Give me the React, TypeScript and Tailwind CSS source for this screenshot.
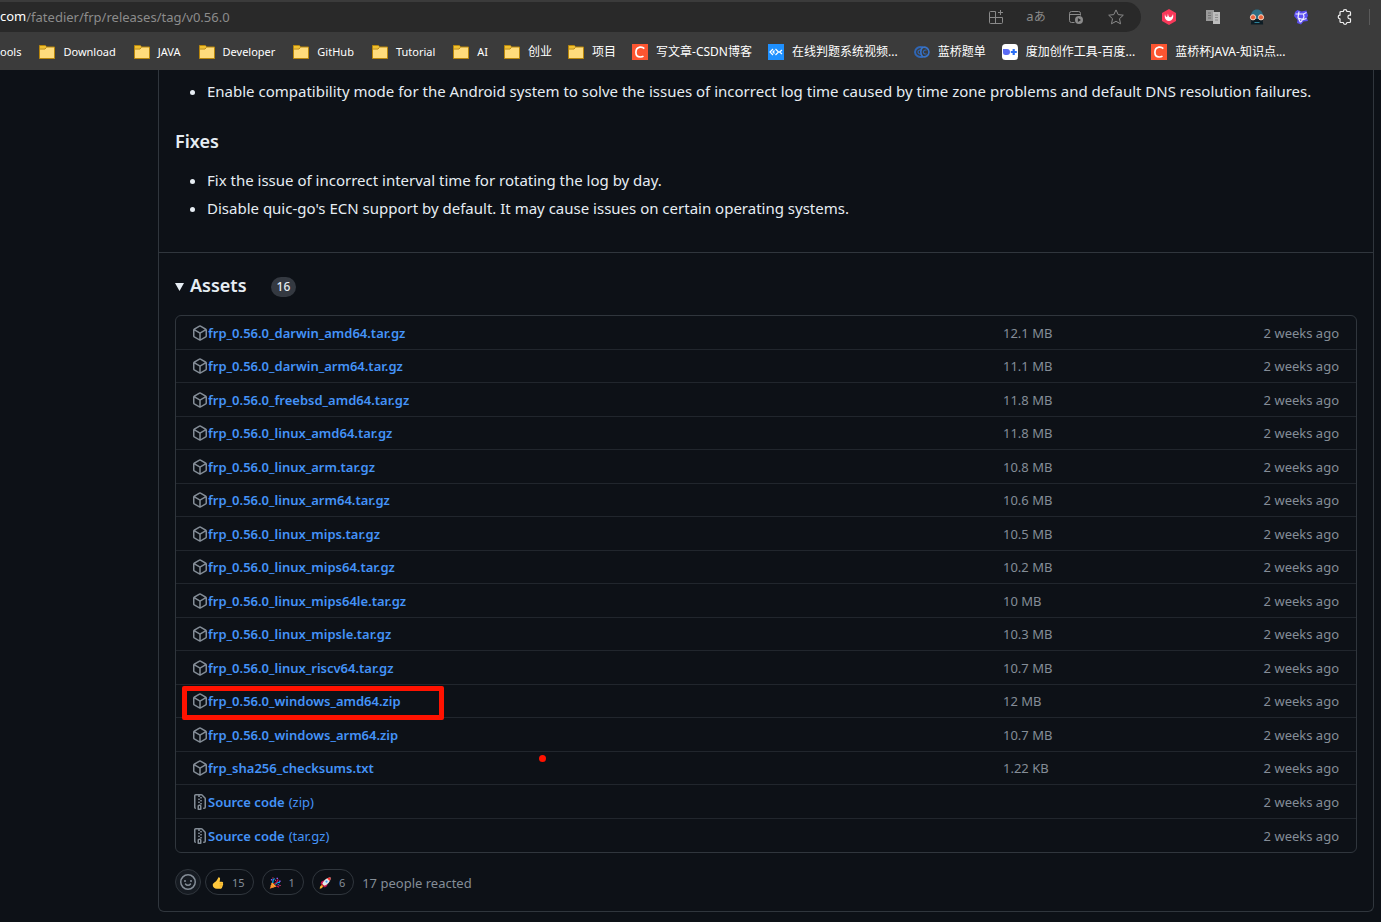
import React from 'react';

type Asset = {
  name: string;
  suffix?: string;
  size?: string;
  mark?: 'box' | 'dot';
};

const assets: Asset[] = [
  { name: 'frp_0.56.0_darwin_amd64.tar.gz', size: '12.1 MB' },
  { name: 'frp_0.56.0_darwin_arm64.tar.gz', size: '11.1 MB' },
  { name: 'frp_0.56.0_freebsd_amd64.tar.gz', size: '11.8 MB' },
  { name: 'frp_0.56.0_linux_amd64.tar.gz', size: '11.8 MB' },
  { name: 'frp_0.56.0_linux_arm.tar.gz', size: '10.8 MB' },
  { name: 'frp_0.56.0_linux_arm64.tar.gz', size: '10.6 MB' },
  { name: 'frp_0.56.0_linux_mips.tar.gz', size: '10.5 MB' },
  { name: 'frp_0.56.0_linux_mips64.tar.gz', size: '10.2 MB' },
  { name: 'frp_0.56.0_linux_mips64le.tar.gz', size: '10 MB' },
  { name: 'frp_0.56.0_linux_mipsle.tar.gz', size: '10.3 MB' },
  { name: 'frp_0.56.0_linux_riscv64.tar.gz', size: '10.7 MB' },
  { name: 'frp_0.56.0_windows_amd64.zip', size: '12 MB', mark: 'box' },
  { name: 'frp_0.56.0_windows_arm64.zip', size: '10.7 MB' },
  { name: 'frp_sha256_checksums.txt', size: '1.22 KB', mark: 'dot' },
  { name: 'Source code', suffix: '(zip)' },
  { name: 'Source code', suffix: '(tar.gz)' },
];

const FolderIcon = () => (
  <svg className="size-4 shrink-0" viewBox="0 0 16 16">
    <path d="M.5 1.5h5.8l1.2 1.500h8v11.500H.5z" fill="#ffdc7c" stroke="#b8860b" />
    <path d="M1 2h5l1 1.200-1 1.300H1z" fill="#f0c02e" />
    <path d="M1 5h5l1.500-1.800" fill="none" stroke="#b8860b" />
  </svg>
);

const CsdnIcon = () => (
  <svg className="size-4 shrink-0" viewBox="0 0 16 16">
    <path d="M0 0h16v16H0z" fill="#fc5531" />
    <path d="M12.300 4.600C11 3.300 9.300 3 7.900 3.200 5.300 3.600 4 5.800 3.900 8.300c0 3 1.600 4.700 4.300 4.700 1.300 0 2.400-.3 3.300-.9" fill="none" stroke="#fff" strokeWidth="1.700" />
  </svg>
);

const CodeIcon = () => (
  <svg className="size-4 shrink-0" viewBox="0 0 16 16">
    <path d="M0 0h16v16H0z" fill="#1e90ff" />
    <path d="M5 5 2 8l3 3M7.500 5l3 3-3 3M6.500 6.500 5 8l1.500 1.500M14 6l-2.500 2L14 10" fill="none" stroke="#fff" strokeWidth="1.200" />
  </svg>
);

const BridgeIcon = () => (
  <svg className="size-4 shrink-0" viewBox="0 0 16 16" fill="none">
    <path d="M9 3.500C5 1.800 1 4.500 1 8s4 6.200 8 4.500" stroke="#2f66b5" strokeWidth="2" />
    <path d="M8 6C5.500 5.500 4 6.500 4 8s1.500 2.500 4 2" stroke="#2f66b5" strokeWidth="1.300" />
    <path d="M8.500 3.500c3-1.200 6.500 1 6.500 4.500s-3.500 5.700-6.500 4.500C6.200 11 6.200 5 8.500 3.500z" stroke="#3873c8" strokeWidth="1.600" />
    <path d="M12.500 6.200C10.500 5.500 9.300 6.800 9.300 8s1.200 2.500 3.200 1.800" stroke="#2f66b5" strokeWidth="1.200" />
  </svg>
);

const DujiaIcon = () => (
  <svg className="size-4 shrink-0" viewBox="0 0 16 16">
    <rect width="16" height="16" rx="3.500" fill="#fff" />
    <path d="M1 5h4a3 3 0 0 1 0 6H3.500A2.500 2.500 0 0 1 1 8.500z" fill="#5b6cf5" />
    <path d="M11.700 5v6M8.800 8h6" stroke="#2b6ff5" strokeWidth="2.200" />
  </svg>
);

const folders = ['Download', 'JAVA', 'Developer', 'GitHub', 'Tutorial', 'AI'];

const bookmarks = [
  { label: '创业', Icon: FolderIcon },
  { label: '项目', Icon: FolderIcon },
  { label: '写文章-CSDN博客', Icon: CsdnIcon },
  { label: '在线判题系统视频...', Icon: CodeIcon },
  { label: '蓝桥题单', Icon: BridgeIcon },
  { label: '度加创作工具-百度...', Icon: DujiaIcon },
  { label: '蓝桥杯JAVA-知识点...', Icon: CsdnIcon },
];

const PackageIcon = () => (
  <svg className="size-4 shrink-0 fill-[#848d97]" viewBox="0 0 16 16">
    <path d="m8.878.392 5.250 3.045c.54.314.872.890.872 1.514v6.098a1.750 1.750 0 0 1-.872 1.514l-5.250 3.045a1.750 1.750 0 0 1-1.756 0l-5.250-3.045A1.750 1.750 0 0 1 1 11.049V4.951c0-.624.332-1.201.872-1.514L7.122.392a1.750 1.750 0 0 1 1.756 0ZM7.875 1.690l-4.630 2.685L8 7.133l4.755-2.758-4.630-2.685a.248.248 0 0 0-.25 0ZM2.500 5.677v5.372c0 .09.047.171.125.216l4.625 2.683V8.432Zm6.250 8.271 4.625-2.683a.25.25 0 0 0 .125-.216V5.677L8.750 8.432Z" />
  </svg>
);

const FileZipIcon = () => (
  <svg className="size-4 shrink-0 fill-[#848d97]" viewBox="0 0 16 16">
    <path d="M3.500 1.750v11.500c0 .09.048.173.126.217a.75.75 0 0 1-.752 1.298A1.748 1.748 0 0 1 2 13.250V1.750C2 .784 2.784 0 3.750 0h5.586c.464 0 .909.185 1.237.513l2.914 2.914c.329.328.513.773.513 1.237v8.586A1.750 1.750 0 0 1 12.250 15h-.5a.75.75 0 0 1 0-1.500h.5a.25.25 0 0 0 .25-.25V4.664a.25.25 0 0 0-.073-.177L9.513 1.573a.25.25 0 0 0-.177-.073H7.250a.75.75 0 0 1 0 1.500h-.5a.75.75 0 0 1 0-1.500h-3a.25.25 0 0 0-.25.25Zm3.750 8.750h.5c.966 0 1.750.784 1.750 1.750v3a.75.75 0 0 1-.75.75h-2.500a.75.75 0 0 1-.75-.75v-3c0-.966.784-1.750 1.750-1.750ZM6 5.250a.75.75 0 0 1 .75-.75h.5a.75.75 0 0 1 0 1.500h-.5A.75.75 0 0 1 6 5.250Zm.75 2.250h.5a.75.75 0 0 1 0 1.500h-.5a.75.75 0 0 1 0-1.500ZM8 6.750A.75.75 0 0 1 8.750 6h.5a.75.75 0 0 1 0 1.500h-.5A.75.75 0 0 1 8 6.750ZM8.750 3h.5a.75.75 0 0 1 0 1.500h-.5a.75.75 0 0 1 0-1.500ZM8 9.750A.75.75 0 0 1 8.750 9h.5a.75.75 0 0 1 0 1.500h-.5A.75.75 0 0 1 8 9.750Zm-1 2.500v2.250h1v-2.250a.25.25 0 0 0-.25-.25h-.5a.25.25 0 0 0-.25.25Z" />
  </svg>
);

const SmileyIcon = () => (
  <svg className="size-4" viewBox="0 0 16 16">
    <circle cx="8" cy="8" r="7.250" fill="none" stroke="#848d97" strokeWidth="1.500" />
    <circle cx="5" cy="7" r="1" fill="#848d97" />
    <circle cx="11" cy="7" r="1" fill="#848d97" />
    <path d="M5.500 10c1.200 1.700 3.800 1.700 5 0" fill="none" stroke="#848d97" strokeWidth="1.500" strokeLinecap="round" />
  </svg>
);

const ThumbsUp = () => (
  <svg className="size-3" viewBox="0 0 16 16">
    <path d="M8.500.500c1.500-.3 2.500.9 2.200 2.400L10.200 6.200h3c1.900 0 2 1.900 1.200 2.500.8.700.6 1.900-.2 2.300.5.800.2 1.800-.7 2.100.3 1-.4 2.400-1.500 2.400H6.500C3 15.500 1 13.300 1 10.600 1 7.800 5.700 7 7.400 2.800z" fill="#ffc83d" />
    <path d="M10 8.700h3.700M10.200 11h3.300M10.300 13.200h2.400" stroke="#e19d1a" strokeWidth=".7" />
  </svg>
);

const Party = () => (
  <svg className="size-3" viewBox="0 0 16 16">
    <path d="M1 15.500 4 6.500l6 6z" fill="#ff822d" />
    <path d="m2.500 11 3 3M3.500 8.200l4.700 4.700" stroke="#fcd53f" strokeWidth="1" />
    <path d="M5 8c0-3 .5-5 2.500-6M8.500 10c1-2 3.500-3.500 6-2.500" stroke="#00a6ed" strokeWidth="1.600" fill="none" />
    <path d="M7 9c3-1 4.500-3 5-6M10 12l3.500 1.500" stroke="#ca0b4a" strokeWidth="1.600" fill="none" />
    <path d="M2.500 2.500h2v2h-2zM10 1h2v1.500h-2zM13.500 4.500h2v2h-2zM11.500 9.500h2v1.500h-2z" fill="#8b5cf6" />
    <path d="M8 3.500h1.500V5H8zM14 10.500h1.500V12H14zM4.500.5H6V2H4.500z" fill="#f5427b" />
  </svg>
);

const Rocket = () => (
  <svg className="size-3" viewBox="0 0 16 16">
    <path d="M1 15.500c0-2.500 1-4.500 3-5l1.500 1.500c-.5 2-2 3.500-4.500 3.500z" fill="#ffb02e" />
    <path d="M2 8.500c1-3 3-4 5-3.800L4.500 10zM7.500 14c3-1 4-3 3.800-5L6 11.500z" fill="#ca0b4a" />
    <path d="M15.500.5c-5 0-9 3-11.200 8.800l2.400 2.400C12.500 9.500 15.500 5.500 15.500.5z" fill="#e6e6e6" />
    <path d="M15.500.5c-1.800 0-3.400.4-4.800 1.200l3.600 3.600c.8-1.400 1.200-3 1.200-4.800z" fill="#f8312f" />
    <circle cx="10" cy="6" r="1.500" fill="#46a4fb" />
    <path d="m3.500 9.500 3 3" stroke="#f8312f" strokeWidth="1.500" />
  </svg>
);

const reactions = [
  { label: 'thumbs up', count: 15, Icon: ThumbsUp },
  { label: 'hooray', count: 1, Icon: Party },
  { label: 'rocket', count: 6, Icon: Rocket },
];

const AddressBar = () => (
  <div className="flex items-center pt-0.5">
    <div className="flex h-[30px] flex-1 items-center rounded-r-full bg-[#292929] pr-[17px] text-[13px]">
      <label htmlFor="address" className="text-white">com</label>
      <input
        id="address"
        className="h-full min-w-0 flex-1 bg-transparent text-[#8c8c8c] outline-none"
        defaultValue="/fatedier/frp/releases/tag/v0.56.0"
      />
      <div className="flex items-center gap-6 text-[#8a8a8a]">
        <button aria-label="Apps">
          <svg className="size-4" viewBox="0 0 16 16" fill="none" stroke="currentColor">
            <path d="M7.500 2.500h-5a1 1 0 0 0-1 1v10a1 1 0 0 0 1 1h11a1 1 0 0 0 1-1v-5h-13M7.500 2.500v12M12.500 1v5M10 3.500h5" />
          </svg>
        </button>
        <button aria-label="Translate" className="w-4">
          <span className="-mx-1 flex items-center justify-center">a<span className="text-xs">あ</span></span>
        </button>
        <button aria-label="Media">
          <svg className="size-4" viewBox="0 0 16 16">
            <path d="M6.500 13.500h-3a2 2 0 0 1-2-2v-7a2 2 0 0 1 2-2h7a2 2 0 0 1 2 2v2M1.500 5.500h11" fill="none" stroke="currentColor" />
            <circle cx="11" cy="11" r="4" fill="currentColor" />
            <path d="m9.900 9 3.100 2-3.100 2z" fill="#292929" />
          </svg>
        </button>
        <button aria-label="Favorite">
          <svg className="size-4" viewBox="0 0 16 16" fill="none" stroke="currentColor" strokeLinejoin="round">
            <path d="m8 .9 2.200 4.700 5.100.6-3.800 3.500 1 5.100L8 12.300l-4.500 2.500 1-5.100L.7 6.200l5.100-.6z" />
          </svg>
        </button>
      </div>
    </div>
    <div className="flex items-center gap-7 pr-[11px] pl-5">
      <button aria-label="Shield">
        <svg className="size-4" viewBox="0 0 16 16">
          <path d="M8 0 15 4v8l-7 4-7-4V4z" fill="#f8395a" />
          <path d="M4 5c-1 4 1 7 4 7s5-3 4-7c-.6 2-1.400 3-2.800 3.200C7.800 8.200 7.200 6.500 7 4.500 6.500 6 6.500 7.500 6 8 4.800 7.800 4.200 6.500 4 5z" fill="#fff" />
        </svg>
      </button>
      <button aria-label="Translator">
        <svg className="size-4" viewBox="0 0 16 16">
          <path d="M1 1h8v11H1z" fill="#9a9a9a" />
          <path d="M3 4h3M3 6.500h3M3 9h3" stroke="#6f6f6f" />
          <path d="M8 3h7v12H8z" fill="#bdbdbd" />
          <path d="M10 6h3M10 8.500h3M10 11h3" stroke="#8a8a8a" />
        </svg>
      </button>
      <button aria-label="Userscripts">
        <svg className="size-4" viewBox="0 0 16 16">
          <path d="M2 7c0-4 2.500-6.500 6-6.500S14 3 14 7v3H2z" fill="#2d6d83" />
          <path d="M2.500 10h11l.7 5.500H1.800z" fill="#0d1c24" />
          <path d="M5.500 13.500h5" stroke="#2d8299" />
          <circle cx="4" cy="8.300" r="2.600" fill="#e8643c" stroke="#f7d7c4" />
          <circle cx="12" cy="8.300" r="2.600" fill="#e8643c" stroke="#f7d7c4" />
        </svg>
      </button>
      <button aria-label="Assistant">
        <svg className="size-4" viewBox="0 0 16 16">
          <path d="m4.500 1 4 1.500 5-1L15 6.500l-1 2.500 1 3-4.500.5-2.500 3-4-1.500.5-3L1 7l1-4z" fill="#5b4ff0" />
          <path d="M2.500 5h8l3-1.500M6 2.500 5 8.500l2.500 5M5 9l5 1.500 3.500-1M10.500 5 11 8l-3 5" stroke="#f1efff" strokeWidth="1.200" fill="none" />
        </svg>
      </button>
      <button aria-label="Extensions">
        <svg className="size-4" viewBox="0 0 16 16" fill="none" stroke="#eee" strokeWidth="1.200" strokeLinejoin="round">
          <path d="M4 2.500h2.300a1.800 1.800 0 0 1 3.600 0h2.600a1 1 0 0 1 1 1v2.700h-.8a1.800 1.800 0 0 0 0 3.600h.8v2.700a1 1 0 0 1-1 1H9.900a1.800 1.800 0 0 1-3.600 0H4a1 1 0 0 1-1-1V9.800a1.800 1.800 0 0 1 0-3.600V3.500a1 1 0 0 1 1-1z" />
        </svg>
      </button>
      <span className="-ml-3 h-4 w-px bg-[#5a5a5a]" />
    </div>
  </div>
);

const Bookmarks = () => (
  <nav className="flex h-[38px] items-center gap-4 overflow-hidden pt-0.5 text-xs whitespace-nowrap text-white">
    <div className="flex items-center gap-[18px] text-[11px]">
      <a href="#tools">ools</a>
      {folders.map((label) => (
        <a key={label} href="#folder" className="flex items-center gap-2">
          <FolderIcon />
          {label}
        </a>
      ))}
    </div>
    {bookmarks.map(({ label, Icon }) => (
      <a key={label} href="#bookmark" className="flex items-center gap-2">
        <Icon />
        {label}
      </a>
    ))}
  </nav>
);

const AssetRow = ({ asset }: { asset: Asset }) => (
  <tr className="group odd:h-[34px] even:h-[33px]">
    <td className="relative w-7/10 border-b border-[#21262d] pl-4 group-last:border-b-0">
      <a href="#asset" className="flex items-center text-[#4493f8]">
        {asset.suffix ? <FileZipIcon /> : <PackageIcon />}
        <span className="font-semibold">{asset.name}</span>
        {asset.suffix && <span className="ml-1">{asset.suffix}</span>}
      </a>
      {asset.mark === 'box' && (
        <span className="absolute top-px left-1.5 z-10 h-[34px] w-[262px] rounded-xs border-5 border-[#ff1200]" />
      )}
      {asset.mark === 'dot' && (
        <span className="absolute top-[3px] left-[363px] size-[7px] rounded-full bg-[#ff1200]" />
      )}
    </td>
    <td className="border-b border-[#21262d] pl-px group-last:border-b-0">{asset.size}</td>
    <td className="border-b border-[#21262d] pr-[17px] text-right group-last:border-b-0">2 weeks ago</td>
  </tr>
);

const App: React.FC = () => {
  return (
    <div className="min-h-screen bg-[#0d1117] font-['Noto_Sans','Noto_Sans_CJK_SC',sans-serif] text-[#e6edf3]">
      <header className="bg-[#3b3b3b]">
        <AddressBar />
        <Bookmarks />
      </header>

      <main className="mr-[7px] ml-[158px] rounded-b-md border border-t-0 border-[#30363d]">
        <section className="border-b border-[#30363d] px-4 pt-[9px] pb-8 text-[15px] leading-6">
          <ul className="list-disc pl-8">
            <li>Enable compatibility mode for the Android system to solve the issues of incorrect log time caused by time zone problems and default DNS resolution failures.</li>
          </ul>
          <h3 className="mt-[26px] mb-3.5 text-lg leading-[25px] font-semibold">Fixes</h3>
          <ul className="list-disc space-y-1 pl-8">
            <li>Fix the issue of incorrect interval time for rotating the log by day.</li>
            <li>Disable quic-go's ECN support by default. It may cause issues on certain operating systems.</li>
          </ul>
        </section>

        <section className="p-4">
          <details open>
            <summary className="flex h-9 list-none items-center">
              <svg className="mr-1.5 h-2 w-[9px] fill-[#e6edf3]" viewBox="0 0 9 8">
                <path d="M0 0h9L4.500 8z" />
              </svg>
              <h3 className="pb-1 text-lg font-semibold">Assets</h3>
              <span className="ml-6 rounded-full bg-[#343941] px-1.5 text-xs leading-5 font-medium">16</span>
            </summary>
            <div className="mt-2.5 rounded-md border border-[#30363d]">
              <table className="w-full table-fixed border-separate border-spacing-0 text-[13px] leading-5 text-[#848d97]">
                <tbody>
                  {assets.map((asset) => (
                    <AssetRow key={asset.name + (asset.suffix ?? '')} asset={asset} />
                  ))}
                </tbody>
              </table>
            </div>
          </details>

          <div className="mt-4 flex items-center text-[13px] text-[#848d97]">
            <button aria-label="Add reaction" className="mr-1 flex size-[26px] items-center justify-center rounded-full border border-[#30363d] bg-[#161b22]">
              <SmileyIcon />
            </button>
            {reactions.map(({ label, count, Icon }) => (
              <button key={label} aria-label={label} className="mr-2 flex h-[26px] items-center gap-2 rounded-full border border-[#30363d] pt-0.5 pr-2 pl-1.5 text-[11px]">
                <Icon />
                {count}
              </button>
            ))}
            <span className="pt-1">17 people reacted</span>
          </div>
        </section>
      </main>
    </div>
  );
};

export default App;
